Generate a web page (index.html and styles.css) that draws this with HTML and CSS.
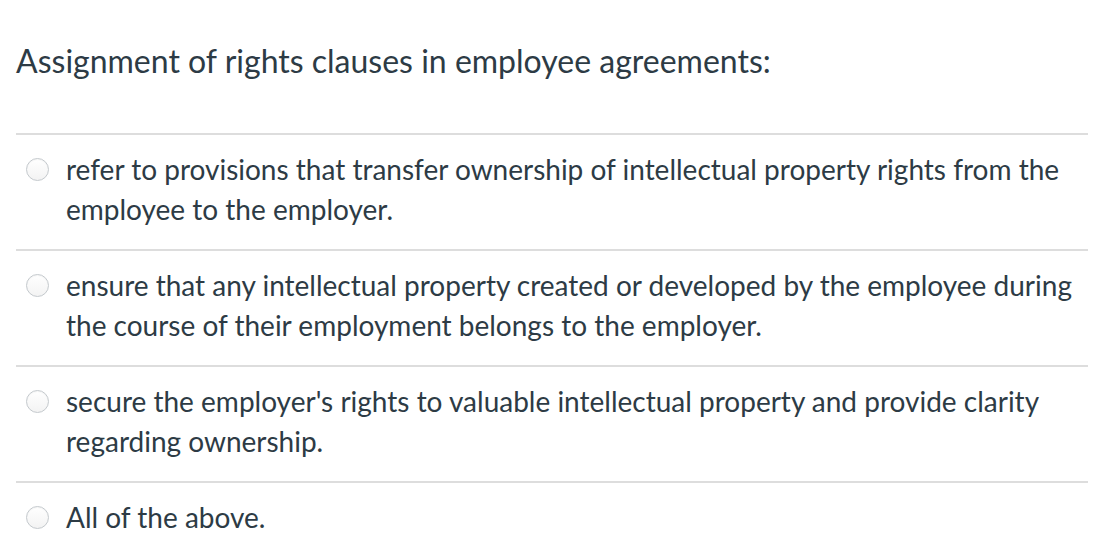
FILE: index.html
```html
<!DOCTYPE html>
<html lang="en">
<head>
<meta charset="utf-8">
<link rel="stylesheet" href="styles.css">
</head>
<body>
<div class="question">
  <div class="question-text">Assignment of rights clauses in employee agreements:</div>
  <div class="answers">
    <label class="answer">
      <span class="radio"></span>
      <span class="answer-text">refer to provisions that transfer ownership of intellectual property rights from the employee to the employer.</span>
    </label>
    <label class="answer">
      <span class="radio"></span>
      <span class="answer-text">ensure that any intellectual property created or developed by the employee during the course of their employment belongs to the employer.</span>
    </label>
    <label class="answer">
      <span class="radio"></span>
      <span class="answer-text">secure the employer's rights to valuable intellectual property and provide clarity regarding ownership.</span>
    </label>
    <label class="answer">
      <span class="radio"></span>
      <span class="answer-text">All of the above.</span>
    </label>
  </div>
</div>
</body>
</html>
```
FILE: styles.css
```css
html, body {
  margin: 0;
  padding: 0;
  background: #ffffff;
}
body {
  font-family: Lato, "Open Sans", sans-serif;
  color: #2d3b45;
}
.question {
  padding: 40px 20px 0 16px;
}
.question-text {
  font-size: 32px;
  line-height: 42px;
  margin-bottom: 51px;
}
.answer {
  display: flex;
  align-items: flex-start;
  border-top: 2px solid #dddddd;
  padding: 14px 0 20px 0;
}
.radio {
  flex: none;
  width: 21px;
  height: 21px;
  border: 1px solid #c4c9cd;
  border-radius: 50%;
  background: linear-gradient(#ffffff, #f3f3f3);
  box-shadow: inset 0 1px 1px rgba(0, 0, 0, 0.04);
  margin: 9px 17px 0 10px;
}
.answer-text {
  font-size: 28px;
  line-height: 40px;
}
```
